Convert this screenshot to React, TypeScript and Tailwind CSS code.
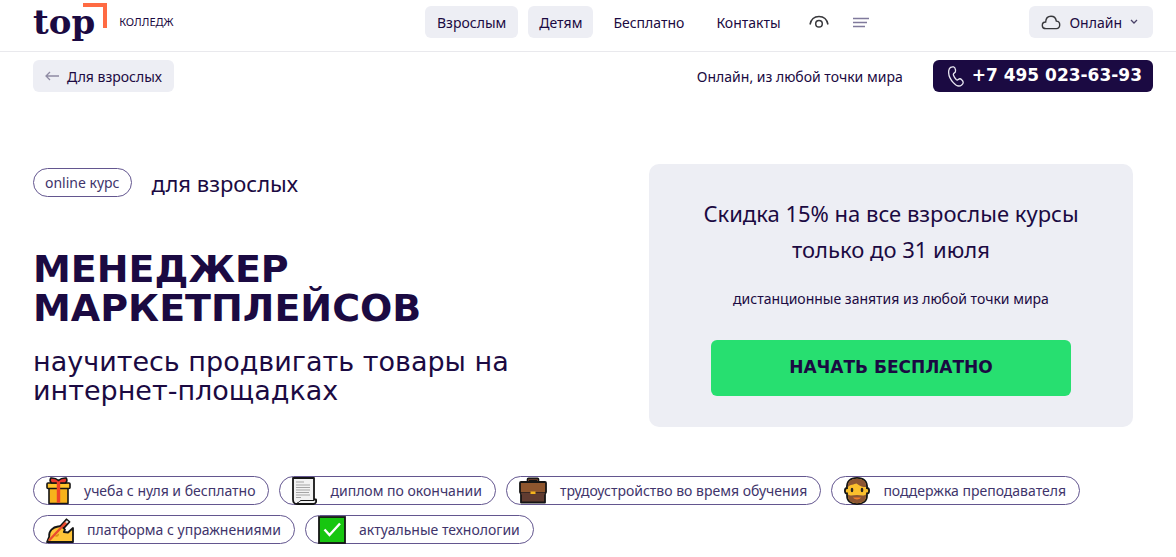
import type { ReactNode } from "react";

const GiftIcon = () => (
  <svg width="25" height="28" viewBox="0 0 25 28" stroke="#151515" strokeWidth="1.6" strokeLinejoin="round">
    <path d="M3 11h19v15.5H3z" fill="#f7b21b" />
    <rect x="1" y="6" width="23" height="5.5" rx="1" fill="#ffc42a" />
    <path d="M12.5 6H5.500C3.500 4.500 4 2.500 4.800 1 8 .8 11 2 12.500 3.500 14 2 17 .8 20.200 1c.8 1.500 1.300 3.500-.7 5z" fill="#e8372c" />
    <path d="M10.800 5h3.400v20.700h-3.400z" fill="#ee4328" stroke="none" />
  </svg>
);

const DiplomaIcon = () => (
  <svg width="25" height="28" viewBox="0 0 25 28" stroke="#151515" strokeWidth="1.8" strokeLinejoin="round">
    <path d="M1 1h21v21.500h2c.5 2.500-.3 4.500-2.500 4.500H5C2.200 27 1 25 1 22.500z" fill="#f2f2f2" />
    <path d="M5 26c2 0 2.500-2.500 4-2.500h13" fill="none" strokeWidth="1" />
    <path d="M4 5h8M4 8h14M4 10.500h14M4 13h14M4 15.500h13M4 18h14M4 20.500h5" stroke="#a5a5a5" strokeWidth="1" />
  </svg>
);

const BriefcaseIcon = () => (
  <svg width="28" height="28" viewBox="0 0 28 28" stroke="#151515" strokeWidth="1.8" strokeLinejoin="round">
    <path d="M9.500 5V2.200h9V5" fill="none" strokeWidth="3.600" />
    <path d="M9.500 5V2.400h9V5" fill="none" stroke="#6d3f2a" strokeWidth="1" />
    <path d="M2 14h24v11.500H2z" fill="#613c31" />
    <rect x="1" y="5" width="26" height="11" rx="1" fill="#8e562e" />
    <path d="M2.200 15.500h23.600v2H2.200z" fill="#613c31" stroke="none" />
    <rect x="11.500" y="14.500" width="5" height="2.500" fill="#f5b51c" stroke="none" />
  </svg>
);

const TeacherIcon = () => (
  <svg width="26" height="28" viewBox="0 0 26 28">
    <path
      d="M3 11C2.500 4 6.500 .9 13 .9S23.500 4 23 11c2.800 0 2.800 5.500 0 5.500v2c0 5.500-4 8.600-10 8.600S3 24 3 18.500v-2C.2 16.500.2 11 3 11z"
      fill="#fbc02d"
      stroke="#151515"
      strokeWidth="1.800"
    />
    <path d="M3.900 10C3.600 4.500 7 1.800 13 1.800S22.400 4.500 22.100 10c-3 0-6-.5-9.600-3.500C10 7.500 6 7.500 3.900 10z" fill="#8c5532" />
    <path d="M4 17.500c2.500 2 5.500.5 9 .5s6.500 1.500 9-.5c.3 5.500-3 8.700-9 8.700s-9.300-3.200-9-8.700z" fill="#8c5532" />
    <path d="M9 20.500h8c-1.500 2.500-6.500 2.500-8 0z" fill="#ef7d2c" />
    <ellipse cx="8" cy="13" rx="1.300" ry="2.200" fill="#2a2522" />
    <ellipse cx="18" cy="13" rx="1.300" ry="2.200" fill="#2a2522" />
  </svg>
);

const WritingIcon = () => (
  <svg width="28" height="28" viewBox="0 0 28 28" strokeLinejoin="round">
    <path d="M13 11.500l7.500-8.200 3 2.700-7.500 8.200z" fill="#e94b2f" stroke="#151515" strokeWidth="1.800" />
    <path
      d="M1 26l2.200-5.500C2.500 15 7 11 12 10.500l3.500-.3 3.500 3.500-1.200 2.300 4.200.5 5-4.500v14z"
      fill="#ffc438"
      stroke="#151515"
      strokeWidth="1.800"
    />
    <path d="M8.500 20c2.500 1.500 5 .2 4.500-2.500z" fill="#d99116" />
    <path d="M3 24.500L20 6.500" stroke="#e94b2f" strokeWidth="2.400" />
    <path d="M20 6.800L21.700 5" stroke="#dcdcdc" strokeWidth="2.400" />
  </svg>
);

const CheckIcon = () => (
  <svg width="28" height="28" viewBox="0 0 28 28" fill="none">
    <rect x="1" y="1" width="26" height="26" fill="#17c610" stroke="#151515" strokeWidth="1.800" />
    <path d="M6.500 13.500l5 5.500L22 7.500" stroke="#fff" strokeWidth="2.400" />
  </svg>
);

const EyeIcon = () => (
  <svg width="20" height="14" viewBox="0 0 20 14" fill="none" stroke="#38383c" strokeWidth="1.500">
    <path d="M1 9.500C2 4.500 5.500 1.500 10 1.500s8 3 9 8" />
    <circle cx="10" cy="8.700" r="3.300" />
  </svg>
);

const MenuIcon = () => (
  <svg width="16" height="11" viewBox="0 0 16 11" stroke="#807a9c" strokeWidth="1.400">
    <path d="M0 1.500h16M0 5.500h14M0 9.500h12" />
  </svg>
);

const CloudIcon = () => (
  <svg width="20" height="15" viewBox="1 0 20 16" fill="none" stroke="#38383c" strokeWidth="1.500">
    <path d="M5.500 14.500c-5 0-5-6.800-.2-7 .2-4 2.500-6.200 5.700-6.200s5.200 2 5.700 5.200c4.800.2 4.800 8 0 8z" />
  </svg>
);

const PhoneIcon = () => (
  <svg width="16" height="21" viewBox="0 0 16 21" fill="none" stroke="#e9e7f2" strokeWidth="1.300" strokeLinejoin="round">
    <path d="M2.600 1.400C4.800.2 6.800.8 7.300 3c.5 1.900.4 3.200-.9 3.900-1 .6-1.300 1.300-.9 2.400.7 1.900 1.500 3.200 2.700 4.300.8.700 1.500.5 2.200-.2 1.100-1 2.200-.8 3.300.3 2 1.900 2 3.600 0 5.200-2.300 1.800-5.700.8-8.400-2.300C1.700 12.600.1 8.500.8 4.400c.2-1.300.8-2.400 1.800-3z" />
  </svg>
);

const BackArrow = () => (
  <svg width="14" height="10" viewBox="0 0 14 10" fill="none" stroke="#8f8ba3" strokeWidth="1.300">
    <path d="M14 5H1M5 1L1 5l4 4" />
  </svg>
);

const ChevronIcon = () => (
  <svg width="8" height="6" viewBox="0 0 8 6" fill="none" stroke="#4a4268" strokeWidth="1.300">
    <path d="M1 1l3 3 3-3" />
  </svg>
);

const features: { icon: ReactNode; label: string }[] = [
  { icon: <GiftIcon />, label: "учеба с нуля и бесплатно" },
  { icon: <DiplomaIcon />, label: "диплом по окончании" },
  { icon: <BriefcaseIcon />, label: "трудоустройство во время обучения" },
  { icon: <TeacherIcon />, label: "поддержка преподавателя" },
  { icon: <WritingIcon />, label: "платформа с упражнениями" },
  { icon: <CheckIcon />, label: "актуальные технологии" },
];

function Header() {
  return (
    <header className="flex items-center border-b border-[#e9e9ed] pt-[6px] pb-[13px] pl-[33px] pr-[23px]">
      <div className="w-[35%] shrink-0">
        <a href="#" className="flex h-8 w-max items-center gap-3" aria-label="top колледж">
          <span className="relative pr-3 font-['DejaVu_Serif',serif] text-[34px] leading-8 font-bold">
            top
            <svg className="absolute -top-[3px] right-0" width="24" height="25" viewBox="0 0 24 25" aria-hidden="true">
              <path d="M0 2h22v23" fill="none" stroke="#ff6b43" strokeWidth="4" />
            </svg>
          </span>
          <span className="text-[11px]">КОЛЛЕДЖ</span>
        </a>
      </div>
      <nav className="flex items-center text-[14px]">
        <a href="#" className="mr-[10px] flex h-8 items-center rounded-md bg-[#edeef4] px-3">Взрослым</a>
        <a href="#" className="flex h-8 items-center rounded-md bg-[#edeef4] px-[11px]">Детям</a>
        <a href="#" className="ml-5">Бесплатно</a>
        <a href="#" className="ml-8">Контакты</a>
        <button type="button" className="ml-7" aria-label="Версия для слабовидящих">
          <EyeIcon />
        </button>
        <button type="button" className="ml-6" aria-label="Меню">
          <MenuIcon />
        </button>
      </nav>
      <button type="button" className="ml-auto flex h-8 items-center gap-2 rounded-md bg-[#edeef4] pl-3 pr-[15px] text-[14px]">
        <CloudIcon />
        Онлайн
        <ChevronIcon />
      </button>
    </header>
  );
}

function SubHeader() {
  return (
    <div className="flex items-center justify-between pt-2 pl-[33px] pr-[23px] text-[14px]">
      <a href="#" className="flex h-8 items-center gap-2 rounded-md bg-[#edeef4] px-3">
        <BackArrow />
        Для взрослых
      </a>
      <div className="flex items-center gap-[30px]">
        <span>Онлайн, из любой точки мира</span>
        <a
          href="tel:+74950236393"
          className="flex h-8 items-center gap-2 rounded-md bg-[#1b0a42] pl-[15px] pr-[11px] font-['DejaVu_Sans',sans-serif] text-[17px] font-bold text-white"
        >
          <PhoneIcon />
          +7 495 023-63-93
        </a>
      </div>
    </div>
  );
}

function Hero() {
  return (
    <section className="flex items-start justify-between pt-[72px] pl-[33px] pr-[43px]">
      <div className="pt-1">
        <div className="flex items-center gap-5">
          <span className="flex h-[29px] items-center rounded-full border border-[#63568f] px-[11px] text-[14px] text-[#40346b]">
            online курс
          </span>
          <span className="text-[22px] leading-7">для взрослых</span>
        </div>
        <h1 className="mt-[53px] font-['DejaVu_Sans',sans-serif] text-[38px] leading-[39px] font-bold">
          МЕНЕДЖЕР
          <br />
          МАРКЕТПЛЕЙСОВ
        </h1>
        <p className="mt-[19px] font-['DejaVu_Sans',sans-serif] text-[27px] leading-[29px]">
          научитесь продвигать товары на
          <br />
          интернет-площадках
        </p>
      </div>
      <div className="flex w-[44%] flex-col items-center rounded-[10px] bg-[#edeef4] px-[62px] pt-[31px] pb-[31px] text-center">
        <p className="text-[22px] leading-9 whitespace-nowrap">
          Скидка 15% на все взрослые курсы
          <br />
          только до 31 июля
        </p>
        <p className="mt-[21px] text-[14px] leading-[22px]">дистанционные занятия из любой точки мира</p>
        <button
          type="button"
          className="mt-[30px] h-14 w-full rounded-md bg-[#27df70] font-['DejaVu_Sans',sans-serif] text-[17px] font-bold"
        >
          НАЧАТЬ БЕСПЛАТНО
        </button>
      </div>
    </section>
  );
}

export default function App() {
  return (
    <main className="bg-white font-['Noto_Sans',sans-serif] text-[#1b0a42]">
      <Header />
      <SubHeader />
      <Hero />
      <ul className="flex flex-wrap gap-[10px] pt-[49px] pb-3 pl-[33px] pr-[43px]">
        {features.map((feature) => (
          <li
            key={feature.label}
            className="flex h-[29px] items-center gap-[13px] rounded-full border border-[#63568f] pl-3 pr-[13px] text-[14px] text-[#40346b]"
          >
            {feature.icon}
            {feature.label}
          </li>
        ))}
      </ul>
    </main>
  );
}
